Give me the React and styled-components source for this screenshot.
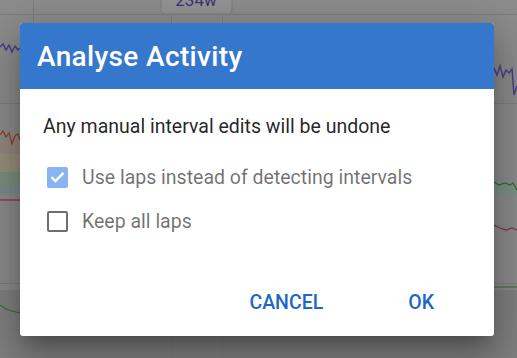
import React, { useState } from "react";
import styled, { createGlobalStyle } from "styled-components";

const GlobalStyle = createGlobalStyle`
  html, body {
    margin: 0;
    padding: 0;
    width: 100%;
    height: 100%;
    overflow: hidden;
  }
  body {
    font-family: Roboto, "Noto Sans", "Liberation Sans", sans-serif;
  }
  #root {
    width: 100%;
    height: 100%;
  }
`;

const color = {
  primary: "#3577cc",
  action: "#1c67c7",
  text: "rgba(0, 0, 0, 0.87)",
  muted: "rgba(0, 0, 0, 0.56)",
  checked: "#8ab3f4",
};

const Screen = styled.div`
  position: relative;
  width: 517px;
  height: 358px;
  overflow: hidden;
  background: #8e8e8e;
`;

const Backdrop = styled.svg`
  position: absolute;
  inset: 0;
`;

const Overlay = styled.div`
  position: absolute;
  inset: 0;
  display: flex;
  align-items: flex-start;
  padding: 23px 0 0 20px;
`;

const DialogStyled = styled.div`
  width: 474px;
  height: 313px;
  display: flex;
  flex-direction: column;
  background: #fff;
  border-radius: 3px;
  overflow: hidden;
  box-shadow: 0 11px 15px -7px rgba(0, 0, 0, 0.25),
    0 24px 38px 3px rgba(0, 0, 0, 0.18), 0 9px 46px 8px rgba(0, 0, 0, 0.14);

  .dialog__header {
    height: 66px;
    display: flex;
    align-items: center;
    padding: 0 17px;
    background: ${color.primary};
    color: #fff;
    font-size: 28px;
    font-weight: 500;
    letter-spacing: 0.35px;
  }

  .dialog__body {
    flex: 1;
    padding: 26px 23px 0;
  }

  .dialog__message {
    font-size: 19.5px;
    color: ${color.text};
    line-height: 24px;
    margin-bottom: 16px;
  }

  .dialog__actions {
    display: flex;
    justify-content: flex-end;
    align-items: center;
    padding: 0 60px 14px 0;
  }
`;

const Option = styled.label`
  display: flex;
  align-items: center;
  height: 44px;
  padding-left: 4px;
  font-size: 19.5px;
  color: ${color.muted};
  cursor: pointer;
`;

const Box = styled.span`
  width: 21px;
  height: 21px;
  box-sizing: border-box;
  border-radius: 2px;
  margin-right: 14px;
  display: flex;
  align-items: center;
  justify-content: center;
  background: ${(p) => (p.$checked ? color.checked : "transparent")};
  border: ${(p) => (p.$checked ? "none" : "2px solid #6f6f6f")};
`;

const ActionButton = styled.button`
  border: none;
  background: none;
  font-family: inherit;
  font-size: 19.5px;
  font-weight: 500;
  color: ${color.action};
  text-transform: uppercase;
  padding: 8px 0;
  margin-left: ${(p) => p.$gap || 0}px;
  cursor: pointer;
`;

const Checkbox = ({ checked, label, onChange }) => (
  <Option onClick={onChange}>
    <Box $checked={checked}>
      {checked && (
        <svg width="15" height="12" viewBox="0 0 15 12">
          <path
            d="M1.5 6.2 L5.4 10 L13.5 1.8"
            fill="none"
            stroke="#fff"
            strokeWidth="2.4"
          />
        </svg>
      )}
    </Box>
    <span>{label}</span>
  </Option>
);

const Chart = () => (
  <Backdrop width="517" height="358" viewBox="0 0 517 358">
    <rect width="517" height="358" fill="#8c8c8c" />
    <rect x="0" y="290" width="517" height="68" fill="#7a7a7a" opacity="0.6" />
    <g stroke="#7d7d7d" strokeWidth="1">
      <line x1="0" y1="14.5" x2="517" y2="14.5" />
      <line x1="0" y1="103.5" x2="517" y2="103.5" />
      <line x1="0" y1="283.5" x2="517" y2="283.5" />
      <line x1="33.5" y1="0" x2="33.5" y2="358" />
      <line x1="171.5" y1="14" x2="171.5" y2="358" />
      <line x1="222.5" y1="14" x2="222.5" y2="358" />
    </g>
    <rect x="161" y="-8" width="71" height="22" rx="4" fill="#939393" stroke="#7d7d7d" />
    <text x="196" y="6" textAnchor="middle" fontSize="17" fill="#3d2f7a" fontFamily="Roboto, sans-serif">
      234w
    </text>
    <path d="M0 47 L3 44 L6 50 L9 45 L12 52 L15 46 L18 50 L20 48" stroke="#4b3a8d" fill="none" strokeWidth="1.4" />
    <path d="M494 68 L497 75 L500 66 L503 77 L506 70 L509 73 L512 69 L514 95 L517 86" stroke="#4b3a8d" fill="none" strokeWidth="1.4" />
    <rect x="0" y="140" width="20" height="14" fill="#9a8478" opacity="0.7" />
    <rect x="0" y="154" width="20" height="18" fill="#97907a" />
    <rect x="0" y="172" width="20" height="14" fill="#7c907e" />
    <rect x="0" y="186" width="20" height="8" fill="#7d8c8e" />
    <path d="M0 135 L3 131 L6 137 L9 133 L12 144 L15 136 L18 134 L20 140" stroke="#9a3a1f" fill="none" strokeWidth="1.2" />
    <line x1="0" y1="200" x2="20" y2="200" stroke="#8f2c4c" strokeWidth="1.2" />
    <path d="M0 305 L6 309 L12 311 L20 313" stroke="#3f6e3a" fill="none" strokeWidth="1.2" />
    <path d="M494 182 L499 185 L505 183 L510 185 L513 183 L517 190 L517 195 L494 195 Z" fill="#7d9386" />
    <path d="M494 182 L499 185 L505 183 L510 185 L513 183 L517 190" stroke="#2f6b2f" fill="none" strokeWidth="1.2" />
    <path d="M494 225 L500 228 L506 230 L512 228 L517 230" stroke="#8f2c4c" fill="none" strokeWidth="1.2" />
    <line x1="494" y1="287" x2="517" y2="287" stroke="#4a7040" strokeWidth="1.2" />
  </Backdrop>
);

const App = () => {
  const [useLaps, setUseLaps] = useState(true);
  const [keepAll, setKeepAll] = useState(false);

  return (
    <>
      <GlobalStyle />
      <Screen>
        <Chart />
        <Overlay>
          <DialogStyled>
            <div className="dialog__header">Analyse Activity</div>
            <div className="dialog__body">
              <div className="dialog__message">
                Any manual interval edits will be undone
              </div>
              <Checkbox
                checked={useLaps}
                label="Use laps instead of detecting intervals"
                onChange={() => setUseLaps(!useLaps)}
              />
              <Checkbox
                checked={keepAll}
                label="Keep all laps"
                onChange={() => setKeepAll(!keepAll)}
              />
            </div>
            <div className="dialog__actions">
              <ActionButton>Cancel</ActionButton>
              <ActionButton $gap={85}>OK</ActionButton>
            </div>
          </DialogStyled>
        </Overlay>
      </Screen>
    </>
  );
};

export default App;
